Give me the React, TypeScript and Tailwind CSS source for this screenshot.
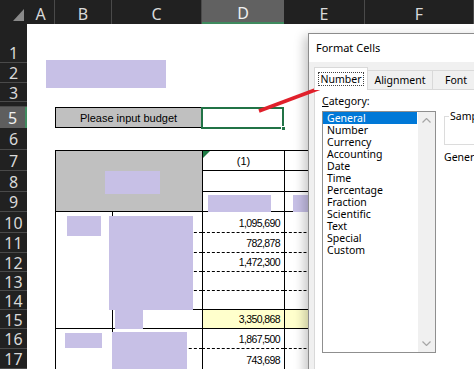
import React from "react";

const HDR =
  "bg-[#212121] text-[#d9d9d9] font-['Noto_Sans',sans-serif] text-[16px] leading-[18px]";
const COLH = `${HDR} flex items-center justify-center pt-[3px] border-r border-[#4a4a4a]`;
const ROWH = `${HDR} flex items-center justify-center pt-[1px] border-b border-[#4a4a4a] overflow-hidden`;
const NUM =
  "flex items-end justify-end pr-[4px] pb-[3px] text-[10.5px] tracking-[-0.6px] leading-[12px]";
const DASH = "border-l border-b border-black [border-bottom-style:dashed]";
const SOLID = "border-l border-b border-black";
const P = "absolute bg-[#c7c0e6]";

function Empty({ n }: { n: number }) {
  return (
    <>
      {Array.from({ length: n }).map((_, i) => (
        <div key={i} />
      ))}
    </>
  );
}

export default function App() {
  const cats = [
    "General",
    "Number",
    "Currency",
    "Accounting",
    "Date",
    "Time",
    "Percentage",
    "Fraction",
    "Scientific",
    "Text",
    "Special",
    "Custom",
  ];
  return (
    <div className="relative w-[474px] h-[369px] overflow-hidden bg-white font-['Liberation_Sans',Arial,sans-serif] text-black">
      <div className="grid grid-cols-[27px_28px_57px_90px_82px_81px_109px] grid-rows-[24px_39px_20px_19px_5px_21px_22px_21px_21px_20px_21px_20px_19px_19px_19px_19px_20px_20px]">
        {/* header row */}
        <div className="bg-[#212121] relative">
          <svg className="absolute left-0 top-0" width="27" height="24">
            <polygon points="24,9 24,21 13,21" fill="#8a8a8a" />
          </svg>
        </div>
        <div className={COLH}>A</div>
        <div className={COLH}>B</div>
        <div className={COLH}>C</div>
        <div className="bg-[#616161] text-[#f0f0f0] font-['Noto_Sans',sans-serif] text-[16px] leading-[18px] flex items-center justify-center pt-[3px] border-b-2 border-[#3f8a5e]">
          D
        </div>
        <div className={COLH}>E</div>
        <div className={COLH}>F</div>

        {/* row 1 */}
        <div className={`${HDR} flex items-end justify-center border-b border-[#4a4a4a]`}>1</div>
        <Empty n={6} />
        {/* row 2 */}
        <div className={ROWH}>2</div>
        <Empty n={6} />
        {/* row 3 */}
        <div className={ROWH}>3</div>
        <Empty n={6} />
        {/* row 4 (hidden) */}
        <div className="bg-[#212121] border-b border-[#4a4a4a]" />
        <Empty n={6} />
        {/* row 5 */}
        <div className="bg-[#5e5e5e] text-[#f0f0f0] font-['Noto_Sans',sans-serif] text-[16px] leading-[18px] flex items-center justify-center pt-[1px] border-r-2 border-[#3f8a5e]">
          5
        </div>
        <div />
        <div className="col-span-2 bg-[#c0c0c0] border border-black flex items-center justify-center pt-[2px] text-[11px]">
          Please input budget
        </div>
        <div className="relative border-t border-b border-r border-black">
          <div className="absolute -left-[1px] -top-[1px] -right-[1px] -bottom-[2px] border-2 border-[#217346]" />
          <div className="absolute -right-[3px] -bottom-[4px] w-[5px] h-[5px] bg-[#217346] border border-white" />
        </div>
        <Empty n={2} />
        {/* row 6 */}
        <div className={ROWH}>6</div>
        <Empty n={6} />
        {/* row 7 */}
        <div className={ROWH}>7</div>
        <div />
        <div className="col-span-2 row-span-3 bg-[#c0c0c0] border-l border-t border-b border-black" />
        <div className="relative border-l border-t border-b border-black flex items-center justify-center pt-[1px] text-[11px]">
          <svg className="absolute left-0 top-0" width="7" height="7">
            <polygon points="0,0 7,0 0,7" fill="#1e7b45" />
          </svg>
          (1)
        </div>
        <div className="border-l border-t border-b border-black" />
        <div className="border-l border-t border-black" />
        {/* row 8 */}
        <div className={ROWH}>8</div>
        <div />
        <div className={SOLID} />
        <div className={SOLID} />
        <div className="border-l border-black" />
        {/* row 9 */}
        <div className={ROWH}>9</div>
        <div />
        <div className={SOLID} />
        <div className={SOLID} />
        <div className="border-l border-black" />
        {/* row 10 */}
        <div className={ROWH}>10</div>
        <div />
        <div className="border-l border-black" />
        <div className={DASH} />
        <div className={`${DASH} ${NUM}`}>1,095,690</div>
        <div className={DASH} />
        <div />
        {/* row 11 */}
        <div className={ROWH}>11</div>
        <div />
        <div className="border-l border-black" />
        <div className={DASH} />
        <div className={`${DASH} ${NUM}`}>782,878</div>
        <div className={DASH} />
        <div />
        {/* row 12 */}
        <div className={ROWH}>12</div>
        <div />
        <div className="border-l border-black" />
        <div className={DASH} />
        <div className={`${DASH} ${NUM}`}>1,472,300</div>
        <div className={DASH} />
        <div />
        {/* row 13 */}
        <div className={ROWH}>13</div>
        <div />
        <div className="border-l border-black" />
        <div className={DASH} />
        <div className={DASH} />
        <div className={DASH} />
        <div />
        {/* row 14 */}
        <div className={ROWH}>14</div>
        <div />
        <div className="border-l border-black" />
        <div className={SOLID} />
        <div className={SOLID} />
        <div className={SOLID} />
        <div />
        {/* row 15 */}
        <div className={ROWH}>15</div>
        <div />
        <div className={SOLID} />
        <div className={SOLID} />
        <div className={`${SOLID} bg-[#ffffcc] ${NUM}`}>3,350,868</div>
        <div className={`${SOLID} bg-[#ffffcc]`} />
        <div />
        {/* row 16 */}
        <div className={ROWH}>16</div>
        <div />
        <div className="border-l border-black" />
        <div className={DASH} />
        <div className={`${DASH} ${NUM}`}>1,867,500</div>
        <div className={DASH} />
        <div />
        {/* row 17 */}
        <div className={ROWH}>17</div>
        <div />
        <div className="border-l border-black" />
        <div className="border-l border-black" />
        <div className={`border-l border-black ${NUM}`}>743,698</div>
        <div className="border-l border-black" />
        <div />
      </div>

      {/* redaction blocks */}
      <div className={`${P} left-[46px] top-[60px] w-[120px] h-[28px]`} />
      <div className={`${P} left-[105px] top-[171px] w-[55px] h-[23px]`} />
      <div className={`${P} left-[208px] top-[195px] w-[63px] h-[17px]`} />
      <div className={`${P} left-[293px] top-[195px] w-[20px] h-[17px]`} />
      <div className={`${P} left-[67px] top-[216px] w-[34px] h-[20px]`} />
      <div className={`${P} left-[109px] top-[216px] w-[84px] h-[94px]`} />
      <div className={`${P} left-[115px] top-[310px] w-[28px] h-[19px]`} />
      <div className={`${P} left-[65px] top-[333px] w-[37px] h-[15px]`} />
      <div className={`${P} left-[112px] top-[332px] w-[75px] h-[37px]`} />

      {/* Format Cells dialog */}
      <div className="absolute left-[308px] top-[33px] w-[190px] h-[345px] border border-[#8c8c8c] bg-[#f0f0f0] shadow-[-4px_3px_10px_rgba(0,0,0,0.22)] font-['Noto_Sans',sans-serif] text-[10.5px] text-black">
        <div className="h-[28px] bg-white flex items-center pl-[7px] text-[11px]">Format Cells</div>
        <div className="pl-[5px] pt-[5px]">
          <div className="flex items-end h-[22px]">
            <div className="relative z-10 -mb-px h-[23px] w-[54px] bg-white border border-b-0 border-[#d9d9d9] px-[3px] pt-[4px]">
              <div className="h-[14px] border border-dotted border-[#444] flex items-center justify-center leading-[12px]">
                Number
              </div>
            </div>
            <div className="h-[19px] w-[65px] border border-l-0 border-b-0 border-[#d9d9d9] flex items-center justify-center leading-[12px]">
              Alignment
            </div>
            <div className="h-[19px] w-[60px] border border-l-0 border-b-0 border-[#d9d9d9] flex items-center pl-[12px] leading-[12px]">
              Font
            </div>
          </div>
          <div className="bg-white border border-[#d9d9d9] h-[290px] pl-[7px] pt-[5px]">
            <div className="leading-[12px]">
              <span className="underline">C</span>ategory:
            </div>
            <div className="flex mt-[4px]">
              <div className="w-[114px] h-[242px] border border-[#8f8f8f] flex bg-white">
                <div className="w-[95px]">
                  {cats.map((c, i) => (
                    <div
                      key={c}
                      className={
                        i === 0
                          ? "h-[12px] leading-[12px] pl-[4px] w-[94px] bg-[#0078d7] text-white"
                          : "h-[12px] leading-[12px] pl-[4px]"
                      }
                    >
                      {c}
                    </div>
                  ))}
                </div>
                <div className="w-[17px] bg-[#f0f0f0] flex flex-col justify-between items-center py-[6px]">
                  <svg width="9" height="5" viewBox="0 0 9 5">
                    <polyline points="0.5,4.5 4.5,0.5 8.5,4.5" fill="none" stroke="#a6a6a6" strokeWidth="1.2" />
                  </svg>
                  <svg width="9" height="5" viewBox="0 0 9 5">
                    <polyline points="0.5,0.5 4.5,4.5 8.5,0.5" fill="none" stroke="#a6a6a6" strokeWidth="1.2" />
                  </svg>
                </div>
              </div>
              <div className="ml-[8px]">
                <div className="relative mt-[5px] h-[29px] w-[60px] border border-[#dcdcdc]">
                  <div className="absolute left-[4px] -top-[7px] bg-white px-[1px] leading-[12px]">Sample</div>
                </div>
                <div className="mt-[6px] leading-[12px] whitespace-nowrap">
                  Gener<span className="text-[#e39a3b]">a</span>l format cells
                </div>
              </div>
            </div>
          </div>
        </div>
      </div>

      {/* red pointer line */}
      <svg className="absolute left-0 top-0 pointer-events-none" width="474" height="369">
        <line x1="259" y1="111" x2="331" y2="84" stroke="#e0202b" strokeWidth="3.5" />
      </svg>
    </div>
  );
}
